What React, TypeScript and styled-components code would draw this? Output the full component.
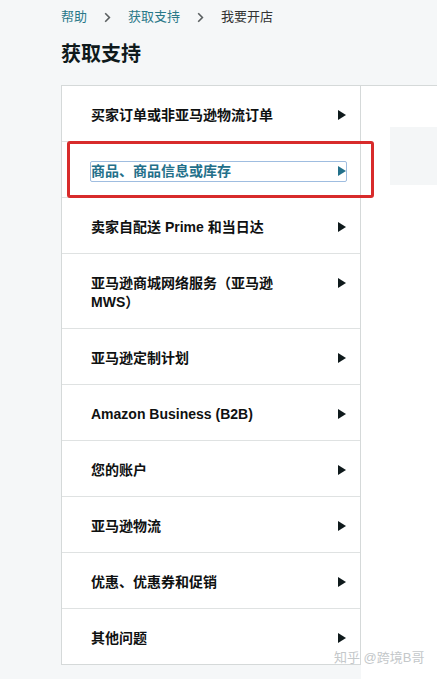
import React from "react";
import styled, { createGlobalStyle } from "styled-components";

const Global = createGlobalStyle`
  html, body { margin: 0; padding: 0; background: #f5f7f8; }
  body { font-family: "Liberation Sans", "Noto Sans CJK SC", sans-serif; }
  * { box-sizing: border-box; }
`;

const Page = styled.div`
  position: relative;
  min-height: 100vh;
  display: flex;
  flex-direction: column;
  padding-left: 61px;
  overflow: hidden;
`;

const Crumbs = styled.nav`
  display: flex;
  align-items: center;
  margin-top: 8px;
  font-size: 13px;
  line-height: 18px;
`;

const CrumbLink = styled.a`
  color: #2a7889;
  text-decoration: none;
`;

const CrumbCurrent = styled.span`
  color: #333;
`;

const Sep = styled.span`
  display: inline-flex;
  width: 41px;
  justify-content: center;
  align-items: center;
`;

const Title = styled.h1`
  margin: 14px 0 17px;
  font-size: 20px;
  line-height: 28px;
  font-weight: 700;
  color: #0f1a1c;
`;

const Main = styled.div`
  flex: 1;
  display: flex;
  border-top: 1px solid #d5d9d9;
`;

const Nav = styled.ul`
  list-style: none;
  margin: 0;
  padding: 0;
  width: 300px;
  flex: none;
  align-self: flex-start;
  background: #fff;
  border-left: 1px solid #d5d9d9;
  border-right: 1px solid #d5d9d9;
  border-bottom: 1px solid #d5d9d9;
`;

const Row = styled.li`
  padding: 20px 14px 16px 29px;
  border-top: 1px solid #dfe2e2;
  &:first-child { border-top: none; }
`;

const ItemLink = styled.a<{ $active?: boolean }>`
  display: flex;
  justify-content: space-between;
  align-items: flex-start;
  font-size: 14px;
  line-height: 19px;
  font-weight: 700;
  color: ${(p) => (p.$active ? "#23708a" : "#0f1111")};
  text-decoration: none;
  border: 1px solid ${(p) => (p.$active ? "#9fbde0" : "transparent")};
  border-radius: 2px;
  margin: -1px;
`;

const ItemText = styled.span`
  max-width: 200px;
`;

const Arrow = styled.span<{ $active?: boolean }>`
  flex: none;
  width: 0;
  height: 0;
  margin-top: 4px;
  border-top: 5px solid transparent;
  border-bottom: 5px solid transparent;
  border-left: 8px solid ${(p) => (p.$active ? "#23708a" : "#0f1a1c")};
`;

const Panel = styled.div`
  flex: 1;
  background: #fff;
  padding: 41px 0 0 29px;
`;

const GreyBox = styled.div`
  height: 58px;
  background: #f4f6f7;
`;

const Highlight = styled.div`
  position: absolute;
  left: 67px;
  top: 141px;
  width: 307px;
  height: 57px;
  border: 3px solid #d82b2b;
  border-radius: 3px;
  pointer-events: none;
`;

const Watermark = styled.div`
  position: absolute;
  left: 334px;
  top: 649px;
  font-size: 13px;
  line-height: 18px;
  color: #c4c8ca;
  white-space: nowrap;
`;

const Chevron = () => (
  <svg width="7" height="11" viewBox="0 0 7 11">
    <path d="M1.2 1.2 L5.4 5.5 L1.2 9.8" fill="none" stroke="#5a5f60" strokeWidth="1.6" />
  </svg>
);

const items = [
  "买家订单或非亚马逊物流订单",
  "商品、商品信息或库存",
  "卖家自配送 Prime 和当日达",
  "亚马逊商城网络服务（亚马逊 MWS）",
  "亚马逊定制计划",
  "Amazon Business (B2B)",
  "您的账户",
  "亚马逊物流",
  "优惠、优惠券和促销",
  "其他问题",
];

export default function App() {
  return (
    <>
      <Global />
      <Page>
        <Crumbs>
          <CrumbLink href="#">帮助</CrumbLink>
          <Sep><Chevron /></Sep>
          <CrumbLink href="#">获取支持</CrumbLink>
          <Sep><Chevron /></Sep>
          <CrumbCurrent>我要开店</CrumbCurrent>
        </Crumbs>
        <Title>获取支持</Title>
        <Main>
          <Nav>
            {items.map((t, i) => (
              <Row key={t}>
                <ItemLink href="#" $active={i === 1}>
                  <ItemText>{t}</ItemText>
                  <Arrow $active={i === 1} />
                </ItemLink>
              </Row>
            ))}
          </Nav>
          <Panel>
            <GreyBox />
          </Panel>
        </Main>
        <Highlight />
        <Watermark>知乎 @跨境B哥</Watermark>
      </Page>
    </>
  );
}
